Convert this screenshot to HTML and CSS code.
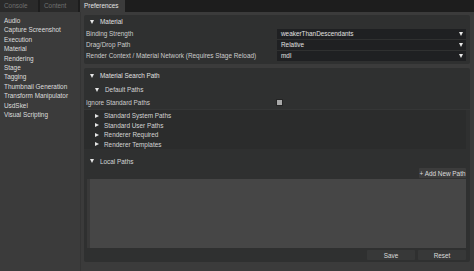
FILE: index.html
```html
<!DOCTYPE html>
<html lang="en">
<head>
  <meta charset="UTF-8" />
  <title>Preferences</title>
  <link rel="stylesheet" href="styles.css">
</head>
<body>
  <div class="tabs">
    <div class="tab">Console</div>
    <div class="tab">Content</div>
    <div class="tab active">Preferences</div>
  </div>

  <div class="layout">
    <div class="sidebar">
      <div class="side-item">Audio</div>
      <div class="side-item">Capture Screenshot</div>
      <div class="side-item">Execution</div>
      <div class="side-item">Material</div>
      <div class="side-item">Rendering</div>
      <div class="side-item">Stage</div>
      <div class="side-item">Tagging</div>
      <div class="side-item">Thumbnail Generation</div>
      <div class="side-item">Transform Manipulator</div>
      <div class="side-item">UsdSkel</div>
      <div class="side-item">Visual Scripting</div>
    </div>

    <div class="main">
      <div class="section material">
        <div class="section-head"><span class="tri down"></span>Material</div>
        <div class="row">
          <label>Binding Strength</label>
          <div class="select">weakerThanDescendants<span class="tri down"></span></div>
        </div>
        <div class="row">
          <label>Drag/Drop Path</label>
          <div class="select">Relative<span class="tri down"></span></div>
        </div>
        <div class="row">
          <label>Render Context / Material Network (Requires Stage Reload)</label>
          <div class="select">mdl<span class="tri down"></span></div>
        </div>
      </div>

      <div class="section search">
        <div class="section-head"><span class="tri down"></span>Material Search Path</div>
        <div class="sub-head"><span class="tri down"></span>Default Paths</div>
        <div class="row check-row">
          <label>Ignore Standard Paths</label>
          <div class="check"></div>
        </div>
        <div class="path-group">
          <div class="path-item"><span class="tri right"></span>Standard System Paths</div>
          <div class="path-item"><span class="tri right"></span>Standard User Paths</div>
          <div class="path-item"><span class="tri right"></span>Renderer Required</div>
          <div class="path-item"><span class="tri right"></span>Renderer Templates</div>
        </div>
        <div class="sub-head local"><span class="tri down"></span>Local Paths</div>
        <div class="add-row"><button class="btn">+ Add New Path</button></div>
        <div class="path-list"></div>
        <div class="actions">
          <button class="btn wide">Save</button>
          <button class="btn wide">Reset</button>
        </div>
      </div>
    </div>
  </div>
</body>
</html>
```

FILE: styles.css
```css
html, body {
  height: 100%;
}

body {
  margin: 0;
  background: #3b3b3b;
  color: #d2d2d2;
  font-family: 'Liberation Sans', Arial, sans-serif;
  font-size: 6.4px;
  overflow: hidden;
}

.tabs {
  display: flex;
  height: 12px;
  background: #1d1d1d;
}

.tab {
  width: 34px;
  margin-right: 2px;
  padding-left: 4px;
  line-height: 12px;
  background: #2a2a2a;
  color: #707070;
}

.tab.active {
  width: 41px;
  background: #3b3b3b;
  color: #e4e4e4;
}

.layout {
  display: flex;
  height: 259px;
}

.sidebar {
  width: 80px;
  padding-top: 4px;
  border-right: 1px solid #343434;
}

.side-item {
  padding-left: 4px;
  height: 9.4px;
  line-height: 9.4px;
  color: #dedede;
  white-space: nowrap;
}

.main {
  flex: 1;
  padding: 3px 4px 0 3px;
  display: flex;
  flex-direction: column;
}

.section {
  background: #2f3030;
  border-radius: 2px;
}

.material {
  height: 49px;
}

.section-head {
  height: 13px;
  padding-left: 6px;
  color: #e0e0e0;
  display: flex;
  align-items: center;
}

.tri {
  display: inline-block;
  width: 0;
  height: 0;
  margin-right: 6px;
}

.tri.down {
  border-left: 2.5px solid transparent;
  border-right: 2.5px solid transparent;
  border-top: 4px solid #e6e6e6;
}

.tri.right {
  border-top: 2.5px solid transparent;
  border-bottom: 2.5px solid transparent;
  border-left: 4px solid #e6e6e6;
}

.row {
  display: flex;
  align-items: center;
  height: 11px;
  padding: 0 4px 0 2px;
}

.row label {
  flex: 1;
  color: #cccccc;
  white-space: nowrap;
}

.select {
  width: 185px;
  height: 10px;
  padding-left: 4px;
  background: #1f2022;
  color: #e0e0e0;
  display: flex;
  align-items: center;
  justify-content: space-between;
}

.select .tri {
  margin-right: 3px;
}

.search {
  flex: 1;
  margin-top: 4px;
  margin-bottom: 9px;
  display: flex;
  flex-direction: column;
}

.search .section-head {
  height: 15px;
}

.sub-head {
  height: 13px;
  display: flex;
  align-items: center;
  padding-left: 11px;
  color: #d6d6d6;
}

.check-row {
  height: 13px;
  border-bottom: 1px solid #353636;
}

.check {
  width: 5px;
  height: 5px;
  background: #a8a8a8;
  border: 1px solid #242424;
  margin-right: 183px;
}

.path-group {
  height: 38px;
  padding-top: 1px;
  margin-right: 4px;
  background: #2b2c2c;
}

.path-item {
  height: 9.5px;
  display: flex;
  align-items: center;
  padding-left: 11px;
  color: #d4d4d4;
}

.path-item .tri {
  margin-right: 5px;
}

.local {
  height: 14px;
  margin-top: 5px;
  padding-left: 6px;
}

.add-row {
  display: flex;
  justify-content: flex-end;
  padding-right: 4px;
}

.btn {
  font-family: inherit;
  font-size: 6.4px;
  color: #dcdcdc;
  background: #3f3f3f;
  border: none;
  border-radius: 1px;
  padding: 0;
  height: 10px;
}

.add-row .btn {
  width: 47px;
  background: #3c3c3c;
}

.path-list {
  flex: 1;
  margin: 1px 4px 0 3px;
  background: #464646;
  border-left: 3px solid #393939;
}

.actions {
  display: flex;
  justify-content: flex-end;
  gap: 3px;
  padding: 2px 4px 0 0;
  height: 12px;
}

.actions .btn {
  width: 48px;
  background: #373838;
}
```
